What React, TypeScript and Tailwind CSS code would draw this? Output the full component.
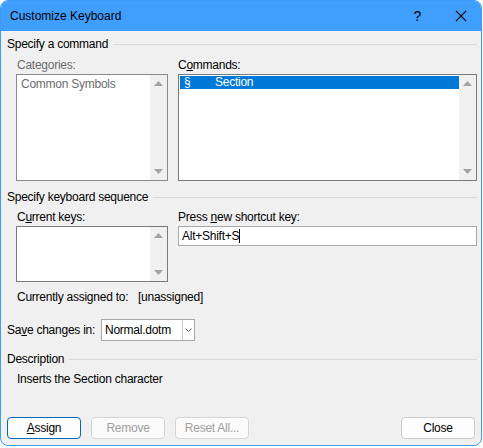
import React from "react";

const font = { fontFamily: '"Segoe UI", "Liberation Sans", Arial, sans-serif' };

function Arrow({ dir }: { dir: "up" | "down" }) {
  return (
    <svg width="9" height="5" viewBox="0 0 9 5" className="block">
      {dir === "up" ? (
        <polygon points="0,5 4.5,0 9,5" fill="#a3a3a3" />
      ) : (
        <polygon points="0,0 4.5,5 9,0" fill="#a3a3a3" />
      )}
    </svg>
  );
}

function ScrollCol() {
  return (
    <div className="w-[17px] bg-[#f0f0f0] flex flex-col items-center justify-between py-[6px]">
      <Arrow dir="up" />
      <Arrow dir="down" />
    </div>
  );
}

function SectionHead({ title }: { title: string }) {
  return (
    <div className="flex items-center h-[16px] gap-[5px]">
      <span className="text-black leading-[16px]">{title}</span>
      <div className="flex-1 h-px bg-[#d8d8d8]" />
    </div>
  );
}

function Btn({ children, disabled, focused }: { children: React.ReactNode; disabled?: boolean; focused?: boolean }) {
  const cls = focused
    ? "border-[#0067c0] text-black bg-[#fdfdfd]"
    : disabled
    ? "border-[#d5d5d5] text-[#a0a0a0] bg-[#fbfbfb]"
    : "border-[#cccccc] text-black bg-[#fdfdfd]";
  return (
    <div className={`w-[74px] h-[22px] border rounded-[4px] flex items-center justify-center leading-[16px] ${cls}`}>
      {children}
    </div>
  );
}

export default function App() {
  return (
    <div className="w-[483px] h-[448px] bg-white text-[12px] tracking-[-0.25px]" style={font}>
      <div className="w-[482px] h-[446px] border border-[#3d9bfc] rounded-[8px] overflow-hidden bg-[#f0f0f0] flex flex-col">
        {/* Title bar */}
        <div className="h-[30px] bg-[#409eff] flex items-center pl-[9px] pr-[14px] shrink-0">
          <span className="text-black text-[12px] tracking-normal leading-[16px] flex-1">Customize Keyboard</span>
          <span className="text-black text-[14px] mr-[34px]">?</span>
          <svg width="12" height="12" viewBox="0 0 12 12">
            <path d="M1 1 L11 11 M11 1 L1 11" stroke="#111" strokeWidth="1.1" />
          </svg>
        </div>

        <div className="pl-[6px] pr-[4px] pt-[5px] flex flex-col">
          <SectionHead title="Specify a command" />

          <div className="flex gap-[10px] pl-[9px] mt-[5px]">
            <div className="w-[152px] flex flex-col">
              <div className="leading-[16px] text-[#6d6d6d] pl-px">Categories:</div>
              <div className="mt-[1px] h-[107px] border border-[#8a8a8a] bg-white flex">
                <div className="flex-1 pl-[4px] pt-[2px] leading-[14px] text-[#6d6d6d]">Common Symbols</div>
                <ScrollCol />
              </div>
            </div>
            <div className="w-[299px] flex flex-col">
              <div className="leading-[16px] text-black">
                C<span className="underline">o</span>mmands:
              </div>
              <div className="mt-[1px] h-[107px] border border-[#7a7a7a] bg-white flex">
                <div className="flex-1 pl-[1px] pt-[1px]">
                  <div className="h-[13px] bg-[#0078d7] text-white leading-[13px] flex">
                    <span className="w-[35px] pl-[4px]">§</span>
                    <span>Section</span>
                  </div>
                </div>
                <ScrollCol />
              </div>
            </div>
          </div>

          <div className="mt-[8px]">
            <SectionHead title="Specify keyboard sequence" />
          </div>

          <div className="flex gap-[10px] pl-[9px] mt-[4px]">
            <div className="w-[152px] flex flex-col">
              <div className="leading-[16px] text-black pl-px">
                C<span className="underline">u</span>rrent keys:
              </div>
              <div className="mt-[1px] h-[56px] border border-[#7a7a7a] bg-white flex">
                <div className="flex-1" />
                <ScrollCol />
              </div>
            </div>
            <div className="w-[299px] flex flex-col">
              <div className="leading-[16px] text-black">
                Press <span className="underline">n</span>ew shortcut key:
              </div>
              <div className="mt-[1px] h-[20px] border border-[#a8a8a8] bg-white flex items-center pl-[3px]">
                <span className="leading-[16px]">Alt+Shift+S</span>
                <span className="w-px h-[14px] bg-black" />
              </div>
            </div>
          </div>

          <div className="flex pl-[10px] mt-[7px] leading-[16px]">
            <span className="w-[121px]">Currently assigned to:</span>
            <span>[unassigned]</span>
          </div>

          <div className="flex items-center mt-[14px] h-[22px]">
            <span className="w-[94px] leading-[16px]">
              Sa<span className="underline">v</span>e changes in:
            </span>
            <div className="w-[94px] h-[22px] border border-[#a8a8a8] bg-white flex">
              <span className="flex-1 pl-[3px] leading-[20px]">Normal.dotm</span>
              <div className="w-[12px] border-l border-[#c8c8c8] flex items-center justify-center">
                <svg width="7" height="4" viewBox="0 0 7 4">
                  <path d="M0.5 0.5 L3.5 3.5 L6.5 0.5" stroke="#606060" fill="none" strokeWidth="1" />
                </svg>
              </div>
            </div>
          </div>

          <div className="mt-[10px]">
            <SectionHead title="Description" />
          </div>
          <div className="pl-[10px] mt-[4px] leading-[16px]">Inserts the Section character</div>

          <div className="flex items-center mt-[30px]">
            <div className="flex gap-[10px]">
              <Btn focused>
                <span>
                  <span className="underline">A</span>ssign
                </span>
              </Btn>
              <Btn disabled>Remove</Btn>
              <Btn disabled>Reset All...</Btn>
            </div>
            <div className="flex-1" />
            <div className="mr-[2px]">
              <Btn>Close</Btn>
            </div>
          </div>
        </div>
      </div>
    </div>
  );
}
